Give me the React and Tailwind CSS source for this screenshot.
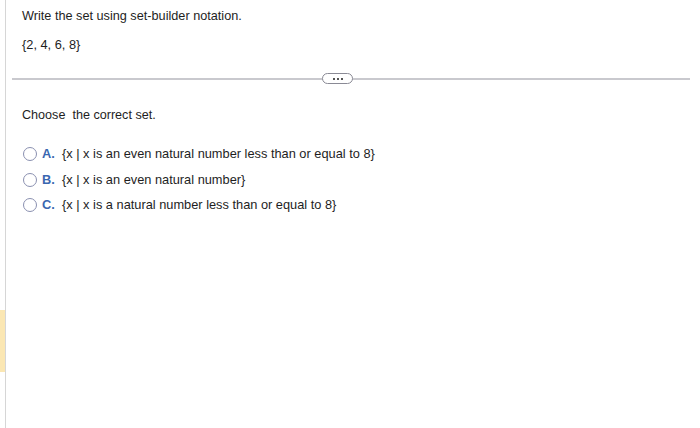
export default function App() {
  const opts = [
    ["A.", "{x | x is an even natural number less than or equal to 8}"],
    ["B.", "{x | x is an even natural number}"],
    ["C.", "{x | x is a natural number less than or equal to 8}"],
  ];
  return (
    <div className="relative w-[700px] h-[428px] bg-white overflow-hidden text-[#1e1e1e] text-[12.8px]" style={{ fontFamily: '"Liberation Sans", Arial, sans-serif' }}>
      <div className="absolute left-[5px] top-0 w-px h-full bg-[#d6d6d6]" />
      <div className="absolute left-0 top-[310px] w-[5px] h-[62px] bg-[#fbe7b3]" />
      <div className="pl-[22px] pt-[8px]">
        <div className="h-[16px] leading-[16px] text-[12.7px]">Write the set using set-builder notation.</div>
        <div className="mt-[13px] h-[16px] leading-[16px]">{"{2, 4, 6, 8}"}</div>
      </div>
      <div className="relative ml-[12px] mr-[10px] mt-[25px] h-[2px] bg-[#c9c9ce]">
        <div className="absolute left-[310px] top-[-5px] w-[31px] h-[11px] rounded-full border border-[#8a8a95] bg-white flex items-center justify-center gap-[2px]">
          <span className="w-[2px] h-[2px] bg-[#555]" />
          <span className="w-[2px] h-[2px] bg-[#555]" />
          <span className="w-[2px] h-[2px] bg-[#555]" />
        </div>
      </div>
      <div className="pl-[22px] mt-[27px] h-[16px] leading-[16px] text-[12.6px]">Choose&nbsp; the correct set.</div>
      <div className="pl-[23px] mt-[23px] flex flex-col gap-[9.5px]">
        {opts.map(([l, t]) => (
          <div key={l} className="flex items-center h-[16px]">
            <span className="w-[14px] h-[14px] rounded-full border-[1.5px] border-[#8a90b0] bg-white" />
            <span className="ml-[5px] w-[20px] font-bold text-[#3a67b0]">{l}</span>
            <span>{t}</span>
          </div>
        ))}
      </div>
    </div>
  );
}
